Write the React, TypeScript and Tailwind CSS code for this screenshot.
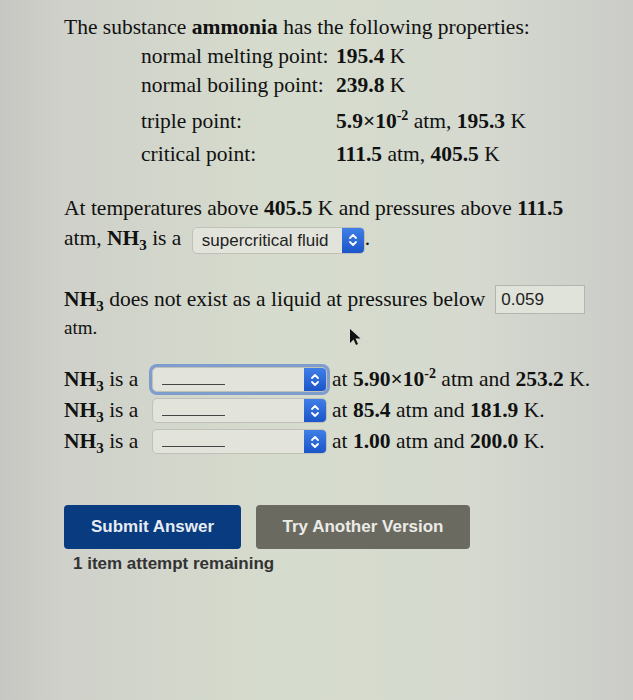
import React from "react";

const serif = { fontFamily: '"Liberation Serif", "Times New Roman", serif' };
const sans = { fontFamily: '"Liberation Sans", Arial, sans-serif' };

function NH3() {
  return (
    <b>
      NH<sub className="text-[15px] relative top-[5px] align-baseline">3</sub>
    </b>
  );
}

function Sup() {
  return <sup className="text-[14px] relative top-[-8px] align-baseline">-2</sup>;
}

function Arrows() {
  return (
    <span className="flex h-full w-[22px] items-center justify-center rounded-r-[4px] bg-[linear-gradient(#3f7fe6,#1b55c9)]">
      <svg width="10" height="16" viewBox="0 0 10 16" fill="none" stroke="white" strokeWidth="1.8" strokeLinecap="round" strokeLinejoin="round">
        <path d="M2 6 L5 3 L8 6" />
        <path d="M2 10 L5 13 L8 10" />
      </svg>
    </span>
  );
}

function Select({ value, width, focused, h, extra = "" }: { value: React.ReactNode; width: string; focused?: boolean; h: string; extra?: string }) {
  return (
    <span
      className={`relative inline-flex items-stretch rounded-[5px] border border-[#bfc1b9] bg-[#e2e4dc] align-middle ${h} ${width} ${extra} ${focused ? "shadow-[0_0_0_3px_#7e9ccc]" : ""}`}
      style={sans}
    >
      <span className="flex flex-1 items-center pl-[9px] text-[17px] text-[#222]">{value}</span>
      <Arrows />
    </span>
  );
}

export default function App() {
  return (
    <div
      className="relative h-[700px] w-[633px] overflow-hidden bg-[linear-gradient(90deg,#c6c7c2_0%,#cfd1ca_10%,#d6dccd_45%,#d5d9cf_75%,#cbccc8_100%)] text-[#111]"
      style={serif}
    >
      <div className="pl-[64px] pt-[13px] text-[21.5px] leading-[29px]">
        <p>
          The substance <b>ammonia</b> has the following properties:
        </p>
        <div className="pl-[77px]">
          <div className="flex">
            <span className="w-[195px]">normal melting point:</span>
            <span>
              <b>195.4</b> K
            </span>
          </div>
          <div className="flex">
            <span className="w-[195px]">normal boiling point:</span>
            <span>
              <b>239.8</b> K
            </span>
          </div>
          <div className="mt-[7px] flex">
            <span className="w-[195px]">triple point:</span>
            <span>
              <b>
                5.9×10
                <Sup />
              </b>{" "}
              atm, <b>195.3</b> K
            </span>
          </div>
          <div className="mt-[4px] flex">
            <span className="w-[195px]">critical point:</span>
            <span>
              <b>111.5</b> atm, <b>405.5</b> K
            </span>
          </div>
        </div>

        <p className="mt-[25px]">
          At temperatures above <b>405.5</b> K and pressures above <b>111.5</b>
        </p>
        <p className="mt-[1px]">
          atm, <NH3 /> is a{" "}
          <Select value="supercritical fluid" width="w-[173px]" h="h-[27px]" extra="ml-[5px]" />.
        </p>

        <p className="mt-[31px] flex items-center">
          <span>
            <NH3 /> does not exist as a liquid at pressures below
          </span>
          <span
            className="ml-[10px] inline-flex h-[29px] w-[90px] items-center border border-[#b4b6ae] bg-[#dfe3d9] pl-[5px] text-[17px] text-[#222]"
            style={sans}
          >
            0.059
          </span>
        </p>
        <p className="-mt-[1px] text-[19px]">atm.</p>

        <div className="mt-[24px] flex flex-col gap-[3px]">
          {[0, 1, 2].map((i) => (
            <div key={i} className="flex h-[28px] items-center">
              <span className="w-[88px] shrink-0">
                <NH3 /> is a
              </span>
              <Select
                value={<span className="mt-[10px] block h-[1.5px] w-[63px] bg-[#444]" />}
                width="w-[175px]"
                h="h-[25px]"
                focused={i === 0}
              />
              <span className="ml-[5px] whitespace-nowrap">
                {i === 0 && (
                  <>
                    at{" "}
                    <b>
                      5.90×10
                      <Sup />
                    </b>{" "}
                    atm and <b>253.2</b> K.
                  </>
                )}
                {i === 1 && (
                  <>
                    at <b>85.4</b> atm and <b>181.9</b> K.
                  </>
                )}
                {i === 2 && (
                  <>
                    at <b>1.00</b> atm and <b>200.0</b> K.
                  </>
                )}
              </span>
            </div>
          ))}
        </div>

        <div className="mt-[49px] flex gap-[15px]" style={sans}>
          <button className="h-[44px] w-[177px] rounded-[4px] bg-[#093b80] text-[17px] font-bold text-[#e6ecf2]">
            Submit Answer
          </button>
          <button className="h-[44px] w-[214px] rounded-[4px] bg-[#6b6a61] text-[17px] font-bold text-[#ecece6]">
            Try Another Version
          </button>
        </div>
        <p className="mt-[0px] pl-[9px] text-[17px] font-bold text-[#333]" style={sans}>
          1 item attempt remaining
        </p>
      </div>

      <svg className="absolute left-[349px] top-[328px]" width="14" height="18" viewBox="0 0 14 18">
        <path d="M1 1 L1 15 L4.5 11.5 L7 17 L9 16 L6.5 10.5 L11.5 10.5 Z" fill="#111" />
      </svg>
    </div>
  );
}
